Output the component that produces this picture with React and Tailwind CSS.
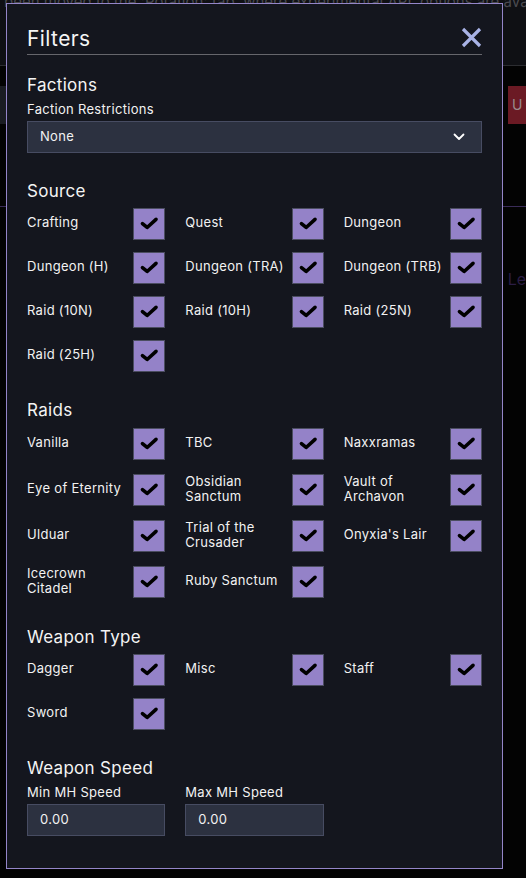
import React from "react";

const SOURCES = [
  "Crafting",
  "Quest",
  "Dungeon",
  "Dungeon (H)",
  "Dungeon (TRA)",
  "Dungeon (TRB)",
  "Raid (10N)",
  "Raid (10H)",
  "Raid (25N)",
  "Raid (25H)",
];

const RAIDS = [
  "Vanilla",
  "TBC",
  "Naxxramas",
  "Eye of Eternity",
  "Obsidian Sanctum",
  "Vault of Archavon",
  "Ulduar",
  "Trial of the Crusader",
  "Onyxia's Lair",
  "Icecrown Citadel",
  "Ruby Sanctum",
];

const WEAPON_TYPES = ["Dagger", "Misc", "Staff", "Sword"];

function Check({ label }) {
  return (
    <label className="flex h-8 items-center justify-between gap-1">
      <span className="-mt-[3px] text-[13px] leading-[15px] tracking-[0.3px] text-[#f2f2f2]">{label}</span>
      <span className="flex h-8 w-8 items-center justify-center border border-[#4b4d60] bg-[#9482c8]">
        <svg width="32" height="32" viewBox="0 0 32 32" fill="none" stroke="#000" strokeWidth="3.8" strokeLinecap="round" strokeLinejoin="round">
          <path d="M9 15.5l5 4.2 9.5-8.7" />
        </svg>
      </span>
    </label>
  );
}

function Section({ title, children, className = "" }) {
  return (
    <div className={className}>
      <h3 className="text-[17px] leading-6 tracking-[0.3px] text-[#f4f4f4]">{title}</h3>
      {children}
    </div>
  );
}

export default function App() {
  return (
    <div className="relative min-h-screen overflow-hidden bg-[#030303] font-['Inter',sans-serif]">
      {/* page behind the modal */}
      <div className="h-[75px] border-b border-[#2c2d31] bg-[#0f1014]">
        <p className="-mt-[9px] whitespace-nowrap pl-1 text-[15px] text-[#4a4a50]">
          been moved to the 'Rotation' tab, where experimental APL options are available
        </p>
      </div>
      <div className="mt-5 flex h-[38px] justify-between">
        <div className="w-[40px] bg-[#1a1c22]" />
        <div className="w-[18px] bg-[#6b1a24] pl-1 pt-2 text-[14px] text-[#9a8a8c]">U</div>
      </div>
      <div className="mt-[82px] border-b border-[#3a2c58]" />
      <div className="flex justify-end pt-[60px] text-[16px] text-[#2b1d45]">
        <span>Le</span>
      </div>

      {/* modal */}
      <div className="absolute left-[6px] top-[3px] w-[497px] border border-[#9485c8] bg-[#14161e] px-5 pb-8 pt-5">
        <div className="flex h-[31px] items-center justify-between border-b border-[#66666c]">
          <h2 className="text-[21px] leading-[30px] tracking-[0.4px] text-[#f5f5f5]">Filters</h2>
          <svg className="mb-1" width="21" height="21" viewBox="0 0 21 21" fill="none" stroke="#a9b3e6" strokeWidth="3.2">
            <path d="M2 2l17 17M19 2L2 19" />
          </svg>
        </div>

        <Section title="Factions" className="mt-[18px]">
          <p className="mt-1 text-[13px] leading-4 tracking-[0.3px] text-[#f2f2f2]">Faction Restrictions</p>
          <div className="mt-1 flex h-8 items-center justify-between border border-[#474c62] bg-[#2c3140] pl-3 pr-4">
            <span className="text-[13px] tracking-[0.3px] text-[#f2f2f2]">None</span>
            <svg width="12" height="8" viewBox="0 0 12 8" fill="none" stroke="#fff" strokeWidth="1.8" strokeLinecap="round" strokeLinejoin="round">
              <path d="M1.5 1.5L6 6l4.5-4.5" />
            </svg>
          </div>
        </Section>

        <Section title="Source" className="mt-[26px]">
          <div className="mt-[5px] grid grid-cols-3 gap-x-5 gap-y-3">
            {SOURCES.map((s) => (
              <Check key={s} label={s} />
            ))}
          </div>
        </Section>

        <Section title="Raids" className="mt-[26px]">
          <div className="mt-[6px] grid grid-cols-3 gap-x-5 gap-y-[14px]">
            {RAIDS.map((s) => (
              <Check key={s} label={s} />
            ))}
          </div>
        </Section>

        <Section title="Weapon Type" className="mt-[27px]">
          <div className="mt-[5px] grid grid-cols-3 gap-x-5 gap-y-3">
            {WEAPON_TYPES.map((s) => (
              <Check key={s} label={s} />
            ))}
          </div>
        </Section>

        <Section title="Weapon Speed" className="mt-[26px]">
          <div className="mt-1 grid grid-cols-3 gap-x-5">
            {["Min MH Speed", "Max MH Speed"].map((l) => (
              <div key={l}>
                <p className="text-[13px] leading-4 tracking-[0.3px] text-[#f2f2f2]">{l}</p>
                <div className="mt-1 flex h-8 items-center border border-[#474c62] bg-[#2c3140] pl-3 text-[13px] tracking-[0.3px] text-[#f2f2f2]">
                  0.00
                </div>
              </div>
            ))}
          </div>
        </Section>
      </div>
    </div>
  );
}
